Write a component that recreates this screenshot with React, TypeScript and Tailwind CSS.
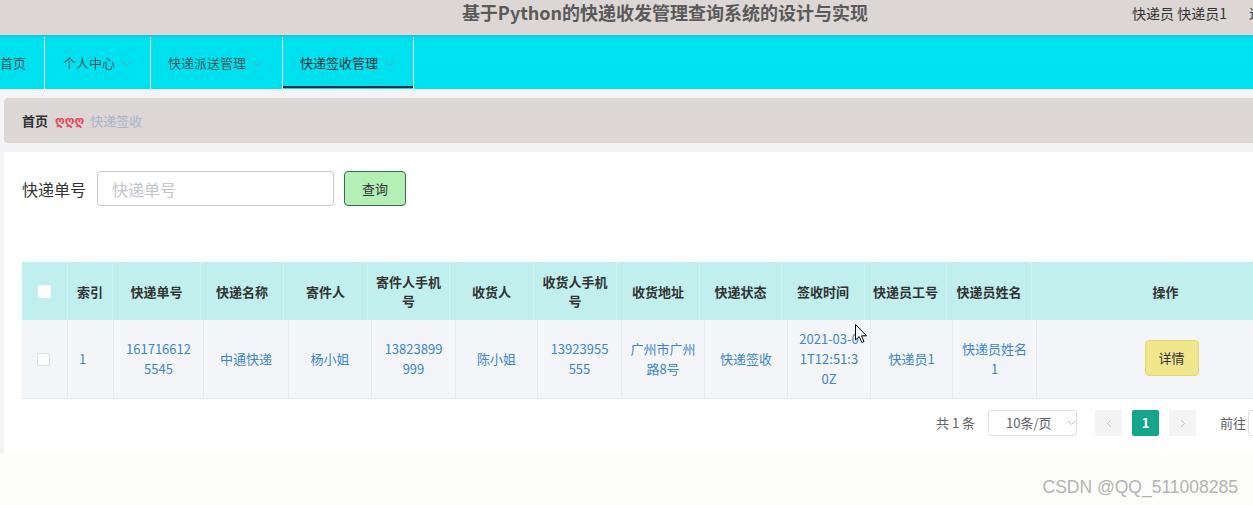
import React from "react";

const FONT = { fontFamily: '"Noto Sans CJK SC", "Liberation Sans", sans-serif' };

const headW = [46, 45, 88, 83, 84, 82, 84, 83, 83, 82, 83, 82, 85, 268];
const bodyW = [46, 46, 90, 85, 83, 84, 82, 84, 83, 83, 83, 82, 84, 270];

const headers: React.ReactNode[] = [
  null,
  "索引",
  "快递单号",
  "快递名称",
  "寄件人",
  <>寄件人手机<br />号</>,
  "收货人",
  <>收货人手机<br />号</>,
  "收货地址",
  "快递状态",
  "签收时间",
  "快递员工号",
  "快递员姓名",
  "操作",
];

const body: React.ReactNode[] = [
  null,
  "1",
  <>161716612<br />5545</>,
  "中通快递",
  "杨小姐",
  <>13823899<br />999</>,
  "陈小姐",
  <>13923955<br />555</>,
  <>广州市广州<br />路8号</>,
  "快递签收",
  <>2021-03-0<br />1T12:51:3<br />0Z</>,
  "快递员1",
  <>快递员姓名<br />1</>,
  null,
];

function Chevron() {
  return (
    <svg width="9" height="6" viewBox="0 0 9 6" className="mt-[1px]" style={{ marginLeft: 7 }}>
      <polyline points="0.5,0.8 4.5,4.8 8.5,0.8" fill="none" stroke="#6a9fab" strokeWidth="1" />
    </svg>
  );
}

function NavItem({ label, first, active, pl, pr }: { label: string; first?: boolean; active?: boolean; pl: number; pr: number }) {
  return (
    <div
      className={
        "relative flex items-center h-full border-r border-[#e6fbfd] text-[13px] " +
        (active ? "text-[#27343d]" : "text-[#3d5960]")
      }
      style={{ paddingLeft: pl, paddingRight: pr }}
    >
      <span>{label}</span>
      {!first && <Chevron />}
      {active && <div className="absolute left-0 right-0 bottom-[1px] h-[2px] bg-[#1e2f40]" />}
    </div>
  );
}

export default function App() {
  return (
    <div className="relative w-[1253px] h-[505px] overflow-hidden bg-[#fdfdfb]" style={FONT}>
      <div className="w-[1330px]">
        {/* top header */}
        <div className="h-[35px] bg-[#dcd6d4] grid grid-cols-[1fr_auto_1fr] items-start">
          <div />
          <div className="leading-[24px] text-[18px] font-bold text-[#5a5a5a]">
            基于Python的快递收发管理查询系统的设计与实现
          </div>
          <div className="flex justify-end items-start pt-[3px] pr-[25px] text-[14px] leading-[20px] text-[#333]">
            <span>快递员 快递员1</span>
            <span className="ml-[22px]">退出登录</span>
          </div>
        </div>

        {/* nav */}
        <div className="h-[54px] bg-[#00e1f0] border-t-2 border-[#1ac8d8] flex">
          <NavItem label="首页" first pl={0} pr={18} />
          <NavItem label="个人中心" pl={18} pr={19} />
          <NavItem label="快递派送管理" pl={17} pr={20} />
          <NavItem label="快递签收管理" active pl={17} pr={19} />
        </div>

        {/* main */}
        <div className="bg-[#f4f4f6] pl-[4px] pt-[9px]">
          <div className="h-[45px] bg-[#dcd6d4] rounded-l-[4px] flex items-center pl-[18px] text-[13px]">
            <span className="font-bold text-[#303133]">首页</span>
            <span className="ml-[7px] text-[#e8485c] text-[12px] font-bold" style={{ fontFamily: '"DejaVu Sans", sans-serif' }}>
              ღღღ
            </span>
            <span className="ml-[6px] text-[#a9b5c8]">快递签收</span>
          </div>

          <div className="mt-[9px] bg-white pl-[18px] pt-[19px] pb-[17px]">
            {/* search */}
            <div className="flex items-center h-[35px]">
              <span className="text-[16px] text-[#333]">快递单号</span>
              <div className="ml-[11px] w-[237px] h-[35px] border border-[#c8c8c8] rounded-[4px] flex items-center pl-[14px] text-[16px] text-[#c0c4cc]">
                快递单号
              </div>
              <button className="ml-[10px] w-[62px] h-[35px] bg-[#b4efb6] border border-[#3d6a4c] rounded-[4px] text-[13px] text-[#333]">
                查询
              </button>
            </div>

            {/* table */}
            <div className="mt-[56px]">
              <div className="flex h-[58px] bg-[#c0efed]">
                {headers.map((h, i) => (
                  <div
                    key={i}
                    className="h-full flex items-center justify-center text-center text-[13px] leading-[19px] font-bold text-[#333] border-r border-[#d2f4f2]"
                    style={{ width: headW[i] }}
                  >
                    {i === 0 ? <div className="w-[13px] h-[13px] bg-white rounded-[2px]" /> : h}
                  </div>
                ))}
              </div>
              <div className="flex h-[79px] bg-[#f4f5f9] border-b border-[#e3e7ed]">
                {body.map((b, i) => (
                  <div
                    key={i}
                    className={
                      "h-full flex items-center text-[13px] leading-[20px] text-[#3b86cc] border-r border-[#e6e9f0] " +
                      (i === 1 ? "justify-start pl-[11px]" : "justify-center text-center")
                    }
                    style={{ width: bodyW[i] }}
                  >
                    {i === 0 ? (
                      <div className="w-[13px] h-[13px] bg-white border border-[#dcdfe6] rounded-[2px] -ml-[2px]" />
                    ) : i === 13 ? (
                      <button className="w-[54px] h-[36px] bg-[#f0e68c] border border-[#e5d877] rounded-[4px] text-[13px] text-[#333] -mt-[2px]">
                        详情
                      </button>
                    ) : (
                      b
                    )}
                  </div>
                ))}
              </div>
            </div>

            {/* pagination */}
            <div className="mt-[11px] flex items-center h-[26px] text-[13px] text-[#606266]">
              <span className="ml-[914px]">共&nbsp;1&nbsp;条</span>
              <div className="ml-[13px] w-[89px] h-[26px] border border-[#dcdfe6] rounded-[3px] flex items-center pl-[17px] text-[#606266]">
                <span>10条/页</span>
                <svg width="9" height="6" viewBox="0 0 9 6" className="ml-[15px]">
                  <polyline points="1,1 4.5,4.5 8,1" fill="none" stroke="#c0c4cc" strokeWidth="1" />
                </svg>
              </div>
              <div className="ml-[18px] w-[27px] h-[26px] bg-[#f4f4f5] rounded-[2px] flex items-center justify-center">
                <svg width="6" height="9" viewBox="0 0 6 9">
                  <polyline points="5,1 1.5,4.5 5,8" fill="none" stroke="#c0c4cc" strokeWidth="1" />
                </svg>
              </div>
              <div className="ml-[10px] w-[27px] h-[26px] bg-[#14a58b] rounded-[2px] flex items-center justify-center text-white font-bold">
                1
              </div>
              <div className="ml-[10px] w-[27px] h-[26px] bg-[#f4f4f5] rounded-[2px] flex items-center justify-center">
                <svg width="6" height="9" viewBox="0 0 6 9">
                  <polyline points="1,1 4.5,4.5 1,8" fill="none" stroke="#c0c4cc" strokeWidth="1" />
                </svg>
              </div>
              <span className="ml-[24px]">前往</span>
              <div className="ml-[2px] w-[46px] h-[26px] border border-[#dcdfe6] rounded-[3px] flex items-center justify-center">1</div>
              <span className="ml-[6px]">页</span>
            </div>
          </div>
        </div>
      </div>

      {/* watermark */}
      <div
        className="absolute right-[15px] top-[476px] text-[17.5px] text-[#b3b3b3] leading-[22px]"
        style={{ fontFamily: '"Liberation Sans", Arial, sans-serif' }}
      >
        CSDN @QQ_511008285
      </div>

      {/* mouse cursor */}
      <svg className="absolute left-[855px] top-[324px]" width="13" height="20" viewBox="0 0 13 20">
        <path d="M0.5,0.5 L0.5,16 L4.2,12.5 L6.8,18.5 L9,17.5 L6.5,11.8 L11.5,11.8 Z" fill="#fff" stroke="#000" strokeWidth="1" strokeLinejoin="round" />
      </svg>
    </div>
  );
}
